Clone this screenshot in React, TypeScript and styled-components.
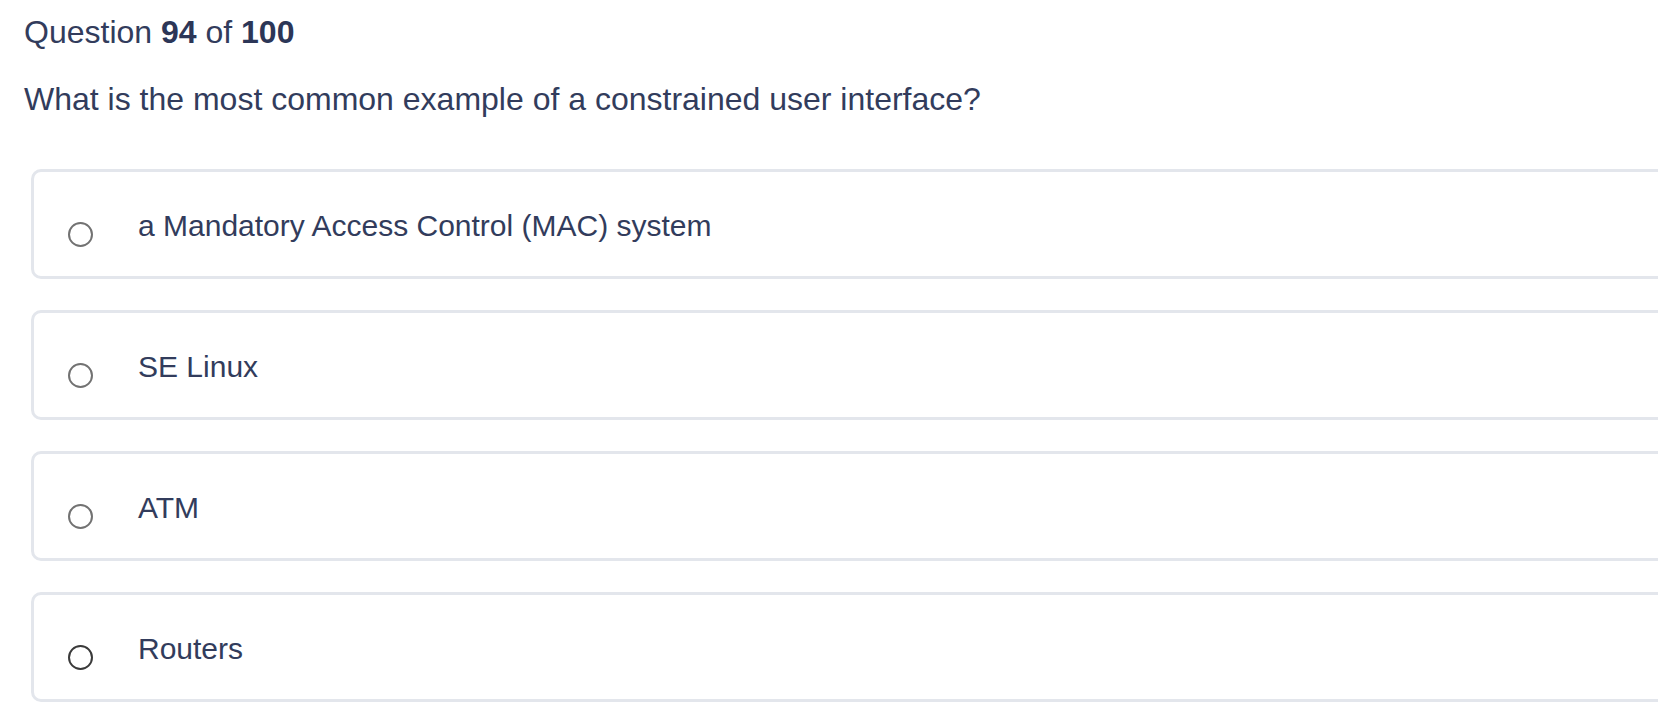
import styled, { createGlobalStyle } from "styled-components";

const GlobalStyle = createGlobalStyle`
  html, body {
    margin: 0;
    padding: 0;
    background: #ffffff;
    overflow: hidden;
  }
  body {
    font-family: "Liberation Sans", Arial, sans-serif;
    color: #323c5c;
  }
`;

const Page = styled.div`
  padding: 14px 0 0 24px;
`;

const Counter = styled.div`
  font-size: 32px;
  line-height: 36px;

  b {
    font-weight: 700;
    color: #2c3657;
  }
`;

const Prompt = styled.div`
  margin-top: 31px;
  font-size: 32px;
  line-height: 36px;
`;

const Choices = styled.div`
  margin-top: 52px;
  margin-left: 7px;
  width: 1700px;
  display: flex;
  flex-direction: column;
  gap: 31px;
`;

const Choice = styled.label`
  box-sizing: border-box;
  height: 110px;
  border: 3px solid #e3e6ec;
  border-radius: 10px;
  display: flex;
  align-items: center;
  padding-left: 34px;
  cursor: pointer;
`;

const Radio = styled.span<{ $dark?: boolean }>`
  box-sizing: border-box;
  flex: none;
  width: 25px;
  height: 25px;
  margin-top: 20px;
  border-radius: 50%;
  border: 2px solid ${(p) => (p.$dark ? "#3a3a3a" : "#727272")};
  background: #fff;
`;

const ChoiceText = styled.span`
  margin-left: 45px;
  margin-top: 4px;
  font-size: 30px;
  line-height: 36px;
`;

const options = [
  "a Mandatory Access Control (MAC) system",
  "SE Linux",
  "ATM",
  "Routers",
];

export default function App() {
  return (
    <Page>
      <GlobalStyle />
      <Counter>
        Question <b>94</b> of <b>100</b>
      </Counter>
      <Prompt>What is the most common example of a constrained user interface?</Prompt>
      <Choices>
        {options.map((o, i) => (
          <Choice key={o}>
            <Radio $dark={i === options.length - 1} />
            <ChoiceText>{o}</ChoiceText>
          </Choice>
        ))}
      </Choices>
    </Page>
  );
}
